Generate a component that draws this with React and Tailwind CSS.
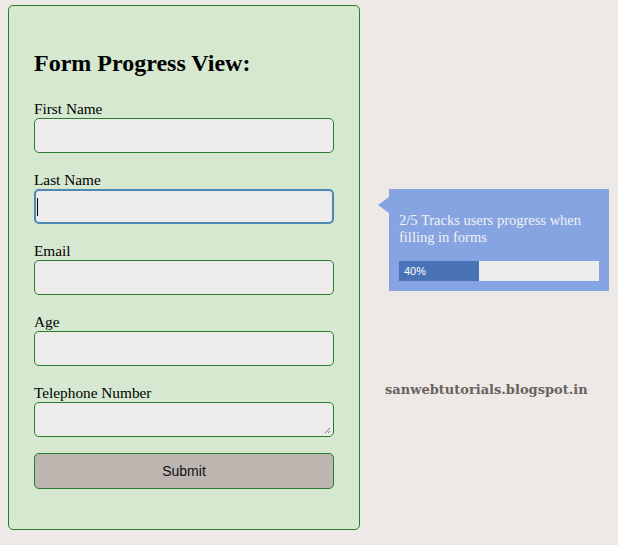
import { useState } from 'react'

const fields = [
  { id: 'first', label: 'First Name' },
  { id: 'last', label: 'Last Name', focused: true },
  { id: 'email', label: 'Email' },
  { id: 'age', label: 'Age' },
]

export default function App() {
  const [progress] = useState(40)

  return (
    <div className="min-h-[545px] w-[618px] bg-[#ece9e6] flex items-start font-['Liberation_Serif',serif] text-black">
      <div className="ml-[8px] mt-[5px] w-[352px] h-[525px] rounded-[5px] border border-[#2a7a30] bg-[#d6e9d0] pl-[25px] pr-[25px] pt-[43px]">
        <h2 className="text-[24px] leading-[28px] font-bold">Form Progress View:</h2>

        <div className="mt-[23px] flex flex-col">
          {fields.map((f) => (
            <div key={f.id} className="flex flex-col h-[71px]">
              <label className="text-[15.3px] leading-[18px]">{f.label}</label>
              <div
                className={`w-[300px] h-[35px] rounded-[5px] bg-[#eeecea] flex items-center px-[1px] ${
                  f.focused ? 'border-[#4e86b8] border-2' : 'border-[1.5px] border-[#2a7a30]'
                }`}
              >
                {f.focused && <span className="w-px h-[18px] bg-black" />}
              </div>
            </div>
          ))}

          <div className="flex flex-col h-[69px]">
            <label className="text-[15.3px] leading-[18px]">Telephone Number</label>
            <div className="relative w-[300px] h-[35px] rounded-[5px] border-[1.5px] border-[#2a7a30] bg-[#eeecea]">
              <svg className="absolute right-[2px] bottom-[2px]" width="8" height="8" viewBox="0 0 8 8">
                <path d="M7 2 L2 7 M7 5 L5 7" stroke="#777" strokeWidth="1" />
              </svg>
            </div>
          </div>

          <button className="w-[300px] h-[36px] rounded-[5px] border-[1.5px] border-[#2a7a30] bg-[#bdb5b0] font-['Liberation_Sans',sans-serif] text-[14px] text-[#111]">
            Submit
          </button>
        </div>
      </div>

      <div className="ml-[29px] flex flex-col">
        <div className="relative mt-[189px] w-[220px] h-[102px] bg-[#85a4e1] px-[10px] pt-[23px]">
          <div className="absolute left-[-11px] top-[8px] w-0 h-0 border-y-[8px] border-y-transparent border-r-[11px] border-r-[#85a4e1]" />
          <p className="text-[14.5px] leading-[17px] text-[#f2f2f4]">2/5 Tracks users progress when filling in forms</p>
          <div className="mt-[15px] w-[200px] h-[20px] bg-[#eeecea] flex">
            <div className="h-full bg-[#4a72b6] flex items-center pl-[5px]" style={{ width: `${progress}%` }}>
              <span className="font-['Liberation_Sans',sans-serif] text-[11px] text-white">{progress}%</span>
            </div>
          </div>
        </div>

        <p className="mt-[89px] ml-[-4px] font-['DejaVu_Serif',serif] font-bold text-[13px] text-[#6b625e]">
          sanwebtutorials.blogspot.in
        </p>
      </div>
    </div>
  )
}
